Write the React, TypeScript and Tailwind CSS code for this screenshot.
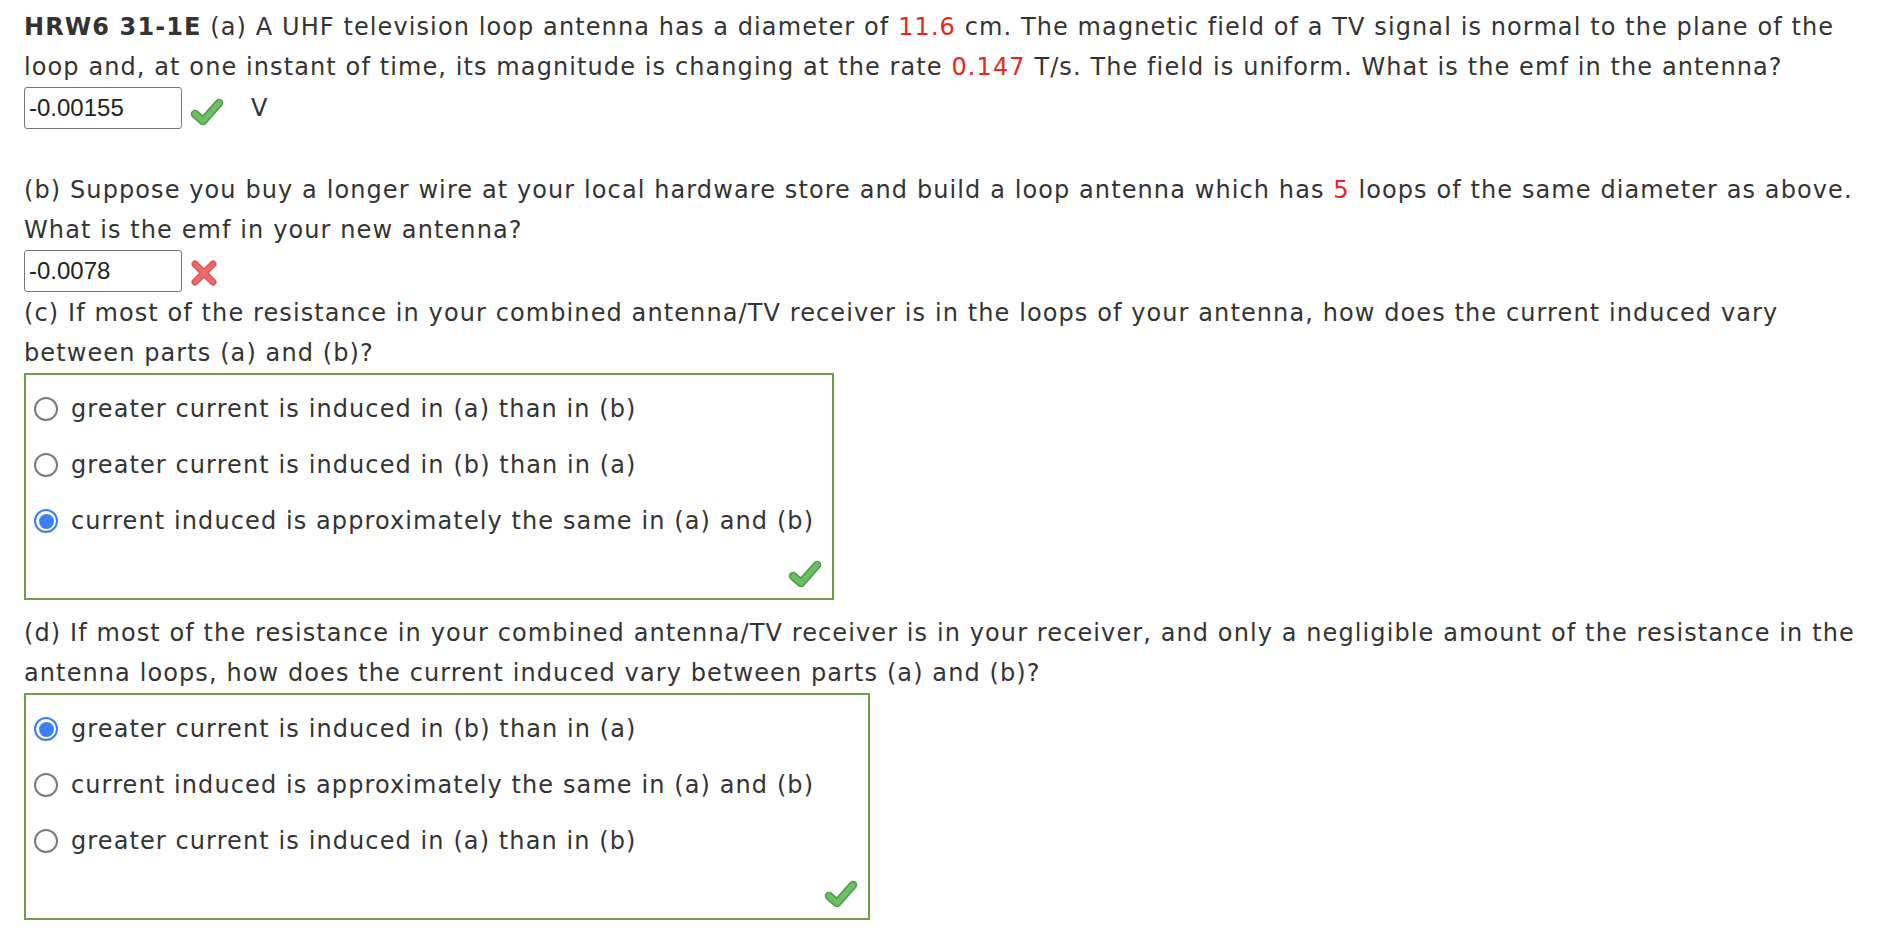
import React from "react";

const font = { fontFamily: '"DejaVu Sans", Verdana, sans-serif' };

function Check({ className = "" }: { className?: string }) {
  return (
    <svg viewBox="0 0 34 28" className={className}>
      <path d="M5 17 L13 24 L29 6" fill="none" stroke="#4e9a47" strokeWidth="8.5" strokeLinecap="round" strokeLinejoin="round" />
      <path d="M5 17 L13 24 L29 6" fill="none" stroke="#6cbf63" strokeWidth="5.5" strokeLinecap="round" strokeLinejoin="round" />
    </svg>
  );
}

function Cross({ className = "" }: { className?: string }) {
  return (
    <svg viewBox="0 0 28 28" className={className}>
      <path d="M5 5 L23 23 M23 5 L5 23" fill="none" stroke="#e05252" strokeWidth="7" strokeLinecap="round" />
      <path d="M5 5 L23 23 M23 5 L5 23" fill="none" stroke="#ee6a6a" strokeWidth="4" strokeLinecap="round" />
    </svg>
  );
}

function Red({ children }: { children: React.ReactNode }) {
  return <span className="text-[#e8271c]">{children}</span>;
}

function Answer({ value }: { value: string }) {
  return (
    <div
      className="w-[158px] h-[42px] border border-[#767676] rounded-[3px] px-[4px] flex items-center text-[24px] tracking-normal text-[#222]"
      style={{ fontFamily: '"Liberation Sans", Arial, sans-serif' }}
    >
      {value}
    </div>
  );
}

function Radio({ checked }: { checked?: boolean }) {
  return checked ? (
    <span className="w-[24px] h-[24px] rounded-full border-[2px] border-[#3b7ff3] flex items-center justify-center shrink-0">
      <span className="w-[15px] h-[15px] rounded-full bg-[#3b7ff3]" />
    </span>
  ) : (
    <span className="w-[24px] h-[24px] rounded-full border-[2px] border-[#7a7a7a] bg-white shrink-0" />
  );
}

function Choices({ options, picked, width }: { options: string[]; picked: number; width: string }) {
  return (
    <div className={`border-[2px] border-[#6f9e44] ${width} pt-[14px] pb-[11px] pl-[8px] pr-[10px] flex flex-col`}>
      <div className="flex flex-col gap-[16px]">
        {options.map((o, i) => (
          <label key={i} className="flex items-center gap-[13px] h-[40px]">
            <Radio checked={i === picked} />
            <span>{o}</span>
          </label>
        ))}
      </div>
      <div className="flex justify-end mt-[18px]">
        <Check className="w-[34px] h-[28px]" />
      </div>
    </div>
  );
}

export default function App() {
  return (
    <div className="min-h-screen bg-white text-[#333] text-[24px] leading-[40px] tracking-[1.1px] pl-[24px] pr-[22px] pt-[7px]" style={font}>
      <p>
        <b className="text-[#333]">HRW6 31-1E</b> (a) A UHF television loop antenna has a diameter of <Red>11.6</Red> cm. The
        magnetic field of a TV signal is normal to the plane of the loop and, at one instant of time, its magnitude is
        changing at the rate <Red>0.147</Red> T/s. The field is uniform. What is the emf in the antenna?
      </p>
      <div className="flex items-center h-[42px]">
        <Answer value="-0.00155" />
        <Check className="w-[34px] h-[28px] ml-[8px] mt-[6px]" />
        <span className="ml-[27px]">V</span>
      </div>

      <p className="mt-[41px]">
        (b) Suppose you buy a longer wire at your local hardware store and build a loop antenna which has <Red>5</Red> loops
        of the same diameter as above. What is the emf in your new antenna?
      </p>
      <div className="flex items-center h-[42px]">
        <Answer value="-0.0078" />
        <Cross className="w-[28px] h-[28px] ml-[8px] mt-[4px]" />
      </div>

      <p className="mt-[1px]">
        (c) If most of the resistance in your combined antenna/TV receiver is in the loops of your antenna, how does the
        current induced vary between parts (a) and (b)?
      </p>
      <Choices
        width="w-[810px]"
        picked={2}
        options={[
          "greater current is induced in (a) than in (b)",
          "greater current is induced in (b) than in (a)",
          "current induced is approximately the same in (a) and (b)",
        ]}
      />

      <p className="mt-[13px]">
        (d) If most of the resistance in your combined antenna/TV receiver is in your receiver, and only a negligible amount
        of the resistance in the antenna loops, how does the current induced vary between parts (a) and (b)?
      </p>
      <Choices
        width="w-[846px]"
        picked={0}
        options={[
          "greater current is induced in (b) than in (a)",
          "current induced is approximately the same in (a) and (b)",
          "greater current is induced in (a) than in (b)",
        ]}
      />
    </div>
  );
}
